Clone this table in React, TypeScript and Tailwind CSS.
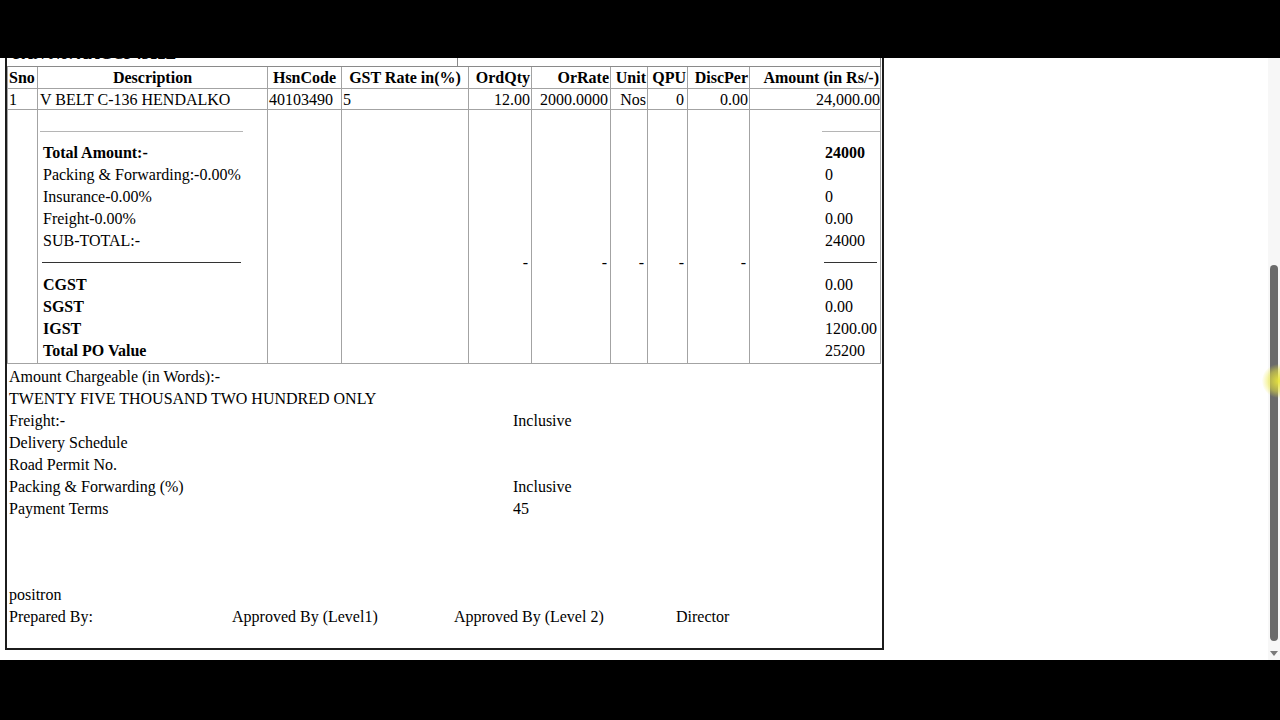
import React from "react";

const headers: { label: string; cls: string }[] = [
  { label: "Sno", cls: "text-left pl-[1px]" },
  { label: "Description", cls: "text-center" },
  { label: "HsnCode", cls: "text-center" },
  { label: "GST Rate in(%)", cls: "text-center" },
  { label: "OrdQty", cls: "text-right pr-[1px]" },
  { label: "OrRate", cls: "text-right pr-[1px]" },
  { label: "Unit", cls: "text-right pr-[1px]" },
  { label: "QPU", cls: "text-right pr-[1px]" },
  { label: "DiscPer", cls: "text-right pr-[1px]" },
  { label: "Amount (in Rs/-)", cls: "text-right pr-[1px]" },
];

const item: { value: string; cls: string }[] = [
  { value: "1", cls: "text-left pl-[1px]" },
  { value: "V BELT C-136 HENDALKO", cls: "text-left pl-[2px]" },
  { value: "40103490", cls: "text-left pl-[1px]" },
  { value: "5", cls: "text-left pl-[1px]" },
  { value: "12.00", cls: "text-right pr-[1px]" },
  { value: "2000.0000", cls: "text-right pr-[2px]" },
  { value: "Nos", cls: "text-right pr-[1px]" },
  { value: "0", cls: "text-right pr-[3px]" },
  { value: "0.00", cls: "text-right pr-[1px]" },
  { value: "24,000.00", cls: "text-right" },
];

type SummaryLine = { label: string; value: string; bold?: boolean; boldValue?: boolean } | "rule";

const summary: SummaryLine[] = [
  { label: "Total Amount:-", value: "24000", bold: true, boldValue: true },
  { label: "Packing & Forwarding:-0.00%", value: "0" },
  { label: "Insurance-0.00%", value: "0" },
  { label: "Freight-0.00%", value: "0.00" },
  { label: "SUB-TOTAL:-", value: "24000" },
  "rule",
  { label: "CGST", value: "0.00", bold: true },
  { label: "SGST", value: "0.00", bold: true },
  { label: "IGST", value: "1200.00", bold: true },
  { label: "Total PO Value", value: "25200", bold: true },
];

const terms: [string, string][] = [
  ["Freight:-", "Inclusive"],
  ["Delivery Schedule", ""],
  ["Road Permit No.", ""],
  ["Packing & Forwarding (%)", "Inclusive"],
  ["Payment Terms", "45"],
];

const cell = "border-r border-b border-[#a3a3a3]";

function DashCell() {
  return <div className={`${cell} pt-[142px] pr-[3px] text-right leading-[22px]`}>-</div>;
}

export default function App() {
  return (
    <div className="flex h-[720px] w-[1280px] flex-col overflow-hidden bg-black font-['Liberation_Serif','Times_New_Roman',serif] text-[16px] text-black">
      <div className="h-[58px] shrink-0" />

      <div className="relative flex h-[602px] shrink-0 bg-white">
        <div className="flex-1 overflow-hidden">
          <div className="ml-[5px] -mt-[14px] w-[879px] border-x-2 border-b-2 border-[#1c1c1c]">
            {/* tail of the section above, scrolled out of view */}
            <div className="flex h-[23px] w-[874px] border-b border-r border-[#8a8a8a]">
              <div className="w-[451px] border-r border-[#8a8a8a] pl-[6px] font-bold leading-[20px]">
                PAN No: AAGCP4512E
              </div>
            </div>

            <div className="grid w-[874px] grid-cols-[30px_230px_74px_127px_63px_79px_37px_40px_62px_131px] border-l border-[#a3a3a3]">
              {headers.map((h) => (
                <div key={h.label} className={`${cell} h-[22px] whitespace-nowrap font-bold leading-[21px] ${h.cls}`}>
                  {h.label}
                </div>
              ))}

              {item.map((c, i) => (
                <div key={i} className={`${cell} h-[21px] whitespace-nowrap leading-[21px] ${c.cls}`}>
                  {c.value}
                </div>
              ))}

              <div className={`${cell} h-[254px]`} />
              <div className={`${cell} pt-[21px]`}>
                <div className="ml-[2px] h-px w-[203px] bg-[#b5b5b5]" />
                <div className="mt-[10px]">
                  {summary.map((s, i) =>
                    s === "rule" ? (
                      <div key={i} className="h-[22px] pt-[10px]">
                        <div className="ml-[4px] h-px w-[199px] bg-[#333]" />
                      </div>
                    ) : (
                      <div key={i} className={`pl-[5px] leading-[22px] ${s.bold ? "font-bold" : ""}`}>
                        {s.label}
                      </div>
                    )
                  )}
                </div>
              </div>
              <div className={cell} />
              <div className={cell} />
              <DashCell />
              <DashCell />
              <DashCell />
              <DashCell />
              <DashCell />
              <div className={`${cell} flex justify-end pt-[21px]`}>
                <div className="w-[58px]">
                  <div className="h-px w-full bg-[#b5b5b5]" />
                  <div className="mt-[10px]">
                    {summary.map((s, i) =>
                      s === "rule" ? (
                        <div key={i} className="h-[22px] pt-[10px]">
                          <div className="ml-[2px] h-px w-[53px] bg-[#333]" />
                        </div>
                      ) : (
                        <div key={i} className={`pl-[3px] leading-[22px] ${s.boldValue ? "font-bold" : ""}`}>
                          {s.value}
                        </div>
                      )
                    )}
                  </div>
                </div>
              </div>
            </div>

            <div className="pl-[2px] pt-[2px] leading-[22px]">
              <div>Amount Chargeable (in Words):-</div>
              <div>TWENTY FIVE THOUSAND TWO HUNDRED ONLY</div>
              {terms.map(([k, v]) => (
                <div key={k} className="grid grid-cols-[504px_1fr]">
                  <span>{k}</span>
                  <span>{v}</span>
                </div>
              ))}

              <div className="mt-[64px]">positron</div>
              <div className="grid grid-cols-[223px_222px_222px_1fr] pb-[20px]">
                <span>Prepared By:</span>
                <span>Approved By (Level1)</span>
                <span>Approved By (Level 2)</span>
                <span>Director</span>
              </div>
            </div>
          </div>
        </div>

        {/* scrollbar */}
        <div className="flex w-[12px] shrink-0 flex-col items-center bg-[#f7f7f7]">
          <div className="mt-[207px] h-[376px] w-[8px] rounded-full bg-[#6b6b6b]" />
          <div className="mt-auto mb-[3px]">
            <svg width="8" height="6" viewBox="0 0 8 6">
              <path d="M0 0 L8 0 L4 5 Z" fill="#7a7a7a" />
            </svg>
          </div>
        </div>

        {/* cursor highlight */}
        <div className="pointer-events-none absolute right-[-16px] top-[306px] h-[34px] w-[34px] rounded-full bg-[radial-gradient(circle,rgba(236,232,60,0.95)_0%,rgba(236,232,60,0.5)_45%,rgba(236,232,60,0)_72%)]" />
      </div>

      <div className="flex-1" />
    </div>
  );
}
